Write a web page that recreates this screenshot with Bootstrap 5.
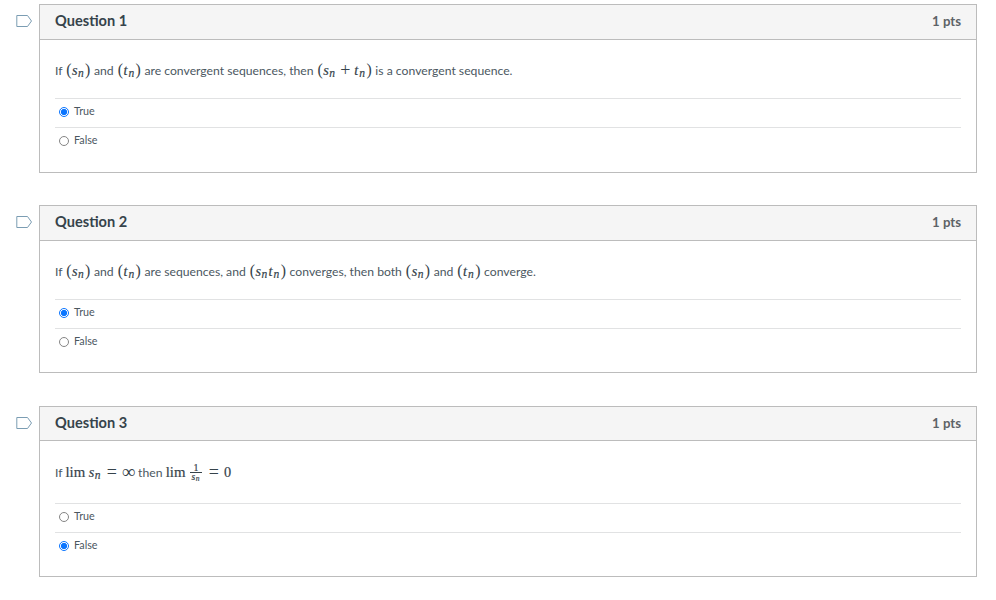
<!DOCTYPE html>
<html lang="en">
<head>
<meta charset="utf-8">
<meta name="viewport" content="width=device-width, initial-scale=1">
<title>Quiz</title>
<link href="https://cdn.jsdelivr.net/npm/bootstrap@5.3.0/dist/css/bootstrap.min.css" rel="stylesheet">
<style>
body{font-family:Lato,"Liberation Sans",sans-serif;font-size:12.2px;color:#4b575f;height:600px;overflow:hidden}
.quiz{padding:4px 19px 0 16px}
.question{height:169px;margin-bottom:32px}
.question.q2{height:168px;margin-bottom:33px}
.question.q3{height:171px}
.flag{width:23px;padding-top:11px;line-height:0}
.question .card{border:1px solid #bcbcbc;border-radius:0}
.question .card-header{height:35px;padding:0 15px 2px;background:#f5f5f5;border-bottom:1px solid #bcbcbc;border-radius:0}
.q3 .card-header{height:34px;padding-bottom:1px}
.question h2{font-size:14.6px;font-weight:700;color:#36434b;line-height:18px}
.pts{font-size:13.2px;font-weight:700;color:#5d6367;padding-top:1px}
.question .card-body{padding:21px 15px 0}
.prompt{height:37px;line-height:20px;white-space:nowrap}
.q3 .card-body{padding-top:20px}
.q3 .prompt{height:42px;line-height:18.5px}
.answer{height:29px;border-top:1px solid #e1e2e3;font-size:10.75px;padding:0 0 3px 3.5px}
.answer input{appearance:none;width:10.5px;height:10.5px;margin:1px 5px 0 0;border:1px solid #858585;border-radius:50%;background:#fff}
.answer input:checked{border-color:#0a75ff;background:radial-gradient(circle,#0a75ff 0 2.8px,#fff 3.4px)}
.math{font-family:"Liberation Serif",serif;font-size:14.3px;color:#36434b;line-height:1;-webkit-text-stroke:.2px #36434b;margin-left:.8px}
.math span,.math i{display:inline-block;line-height:1}
.par{width:5.8px;font-size:15.8px;-webkit-text-stroke:0}
.v-s{width:6px}
.v-t{width:5px}
.math .v-n{width:7.1px;font-size:11.5px;position:relative;top:2px}
.math .op{width:18px;text-align:center;font-size:18px;line-height:.7;-webkit-text-stroke:0;position:relative;top:1px}
.q3 .math .op{width:20px}
.lim{font-size:14.8px}
.q3 .math{margin-left:0}
.inf{width:13.2px;font-size:19px;position:relative;top:1px;-webkit-text-stroke:0}
.frac{width:12px;margin:0 2px 0 4.5px;text-align:center;vertical-align:middle;font-size:10px;position:relative;top:-1px}
.frac .num{display:block;border-bottom:1px solid #36434b;height:10px}
.frac .den{display:block;height:9px;font-size:9.5px}
.math .den .v-n{width:5px;font-size:7.5px;top:1px}
</style>
<script src="https://cdn.jsdelivr.net/npm/bootstrap@5.3.0/dist/js/bootstrap.bundle.min.js"></script>
</head>
<body>
<main class="quiz">
<section class="question d-flex">
<div class="flag flex-shrink-0"><svg width="16" height="13" fill="none" stroke="#7b9db3"><path d="M.8.5h10.7l4 5.5-4 5.5H.8z"/></svg></div>
<div class="card flex-grow-1">
<div class="card-header d-flex justify-content-between align-items-center"><h2 class="m-0">Question 1</h2><span class="pts">1 pts</span></div>
<div class="card-body">
<div class="prompt">If <span class="math"><span class="par">(</span><i class="v-s">s</i><i class="v-n">n</i><span class="par">)</span></span> and <span class="math"><span class="par">(</span><i class="v-t">t</i><i class="v-n">n</i><span class="par">)</span></span> are convergent sequences, then <span class="math"><span class="par">(</span><i class="v-s">s</i><i class="v-n">n</i><span class="op">+</span><i class="v-t">t</i><i class="v-n">n</i><span class="par">)</span></span> is a convergent sequence.</div>
<label class="answer d-flex align-items-center"><input type="radio" name="q1" checked>True</label>
<label class="answer d-flex align-items-center"><input type="radio" name="q1">False</label>
</div></div></section>
<section class="question q2 d-flex">
<div class="flag flex-shrink-0"><svg width="16" height="13" fill="none" stroke="#7b9db3"><path d="M.8.5h10.7l4 5.5-4 5.5H.8z"/></svg></div>
<div class="card flex-grow-1">
<div class="card-header d-flex justify-content-between align-items-center"><h2 class="m-0">Question 2</h2><span class="pts">1 pts</span></div>
<div class="card-body">
<div class="prompt">If <span class="math"><span class="par">(</span><i class="v-s">s</i><i class="v-n">n</i><span class="par">)</span></span> and <span class="math"><span class="par">(</span><i class="v-t">t</i><i class="v-n">n</i><span class="par">)</span></span> are sequences, and <span class="math"><span class="par">(</span><i class="v-s">s</i><i class="v-n">n</i><i class="v-t">t</i><i class="v-n">n</i><span class="par">)</span></span> converges, then both <span class="math"><span class="par">(</span><i class="v-s">s</i><i class="v-n">n</i><span class="par">)</span></span> and <span class="math"><span class="par">(</span><i class="v-t">t</i><i class="v-n">n</i><span class="par">)</span></span> converge.</div>
<label class="answer d-flex align-items-center"><input type="radio" name="q2" checked>True</label>
<label class="answer d-flex align-items-center"><input type="radio" name="q2">False</label>
</div></div></section>
<section class="question q3 d-flex">
<div class="flag flex-shrink-0"><svg width="16" height="13" fill="none" stroke="#7b9db3"><path d="M.8.5h10.7l4 5.5-4 5.5H.8z"/></svg></div>
<div class="card flex-grow-1">
<div class="card-header d-flex justify-content-between align-items-center"><h2 class="m-0">Question 3</h2><span class="pts">1 pts</span></div>
<div class="card-body">
<div class="prompt">If <span class="math"><span class="lim">lim</span> <i class="v-s">s</i><i class="v-n">n</i><span class="op">=</span><span class="inf">∞</span></span> then <span class="math"><span class="lim">lim</span><span class="frac"><span class="num">1</span><span class="den"><i>s</i><i class="v-n">n</i></span></span><span class="op">=</span><span>0</span></span></div>
<label class="answer d-flex align-items-center"><input type="radio" name="q3">True</label>
<label class="answer d-flex align-items-center"><input type="radio" name="q3" checked>False</label>
</div></div></section>
</main>
</body>
</html>
